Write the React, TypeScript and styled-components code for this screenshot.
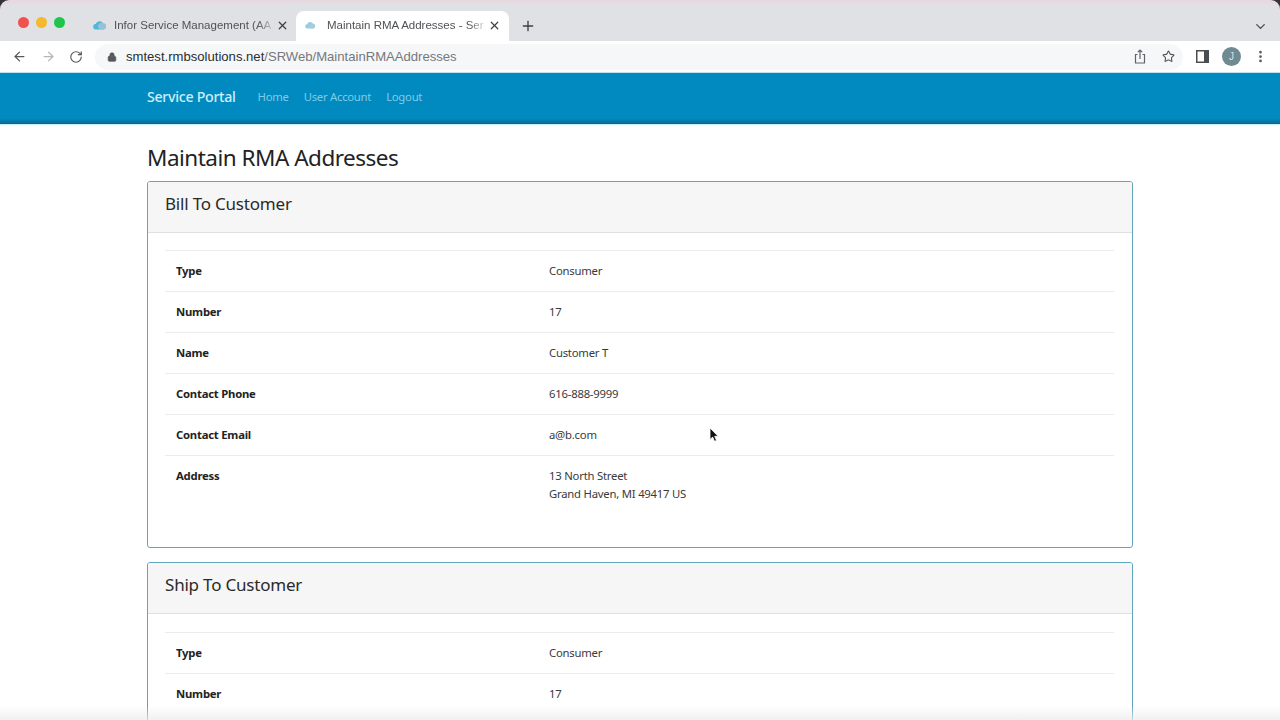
import React from "react";
import styled, { createGlobalStyle } from "styled-components";
import { ArrowLeft, ArrowRight, RotateCw, Lock, X, Plus, ChevronDown, Star, MoreVertical } from "lucide-react";

// ------------------- Styled Components -------------------

const GlobalStyle = createGlobalStyle`
  html, body {
    margin: 0;
    padding: 0;
    height: 720px;
    overflow: hidden;
    background: #fff;
  }
  * {
    box-sizing: border-box;
  }
`;

const Screen = styled.div`
  position: relative;
  width: 1280px;
  height: 720px;
  overflow: hidden;
  font-family: "Noto Sans", "Open Sans", sans-serif;
  color: #333;
`;

const TabFrame = styled.div`
  background: #33323a;
`;

const TabStrip = styled.div`
  height: 41px;
  background: #dfe1e5;
  border-top: 3px solid #e6d9df;
  border-radius: 9px 9px 0 0;
  display: flex;
  align-items: flex-end;
  padding-left: 18px;
`;

const TrafficLights = styled.div`
  display: flex;
  gap: 7px;
  align-self: flex-start;
  margin-top: 14px;
  width: 65px;
`;

const Light = styled.span<{ $color: string }>`
  width: 11px;
  height: 11px;
  border-radius: 50%;
  background: ${(p) => p.$color};
`;

const Tab = styled.div<{ $active?: boolean }>`
  width: 213px;
  height: 30px;
  padding: 0 ${(p) => (p.$active ? "8px" : "7px")} 2px ${(p) => (p.$active ? "9px" : "10px")};
  display: flex;
  align-items: center;
  border-radius: 8px 8px 0 0;
  background: ${(p) => (p.$active ? "#fff" : "transparent")};
  font-family: "Liberation Sans", sans-serif;
  font-size: 11.5px;
  color: #4f5256;
`;

const TabTitle = styled.span<{ $active?: boolean }>`
  flex: 1;
  margin-left: ${(p) => (p.$active ? "11px" : "7px")};
  white-space: nowrap;
  overflow: hidden;
  -webkit-mask-image: linear-gradient(to right, #000 88%, transparent);
  mask-image: linear-gradient(to right, #000 88%, transparent);
`;

const NewTab = styled.div`
  width: 30px;
  height: 30px;
  display: flex;
  align-items: center;
  justify-content: center;
  margin-left: 4px;
  color: #3c4043;
`;

const StripEnd = styled.div`
  margin-left: auto;
  height: 30px;
  padding-right: 12px;
  display: flex;
  align-items: center;
  color: #4a4d51;
`;

const Toolbar = styled.div`
  height: 32px;
  background: #fff;
  display: flex;
  align-items: center;
  padding-left: 12px;
  border-bottom: 1px solid #bfe4ee;
`;

const NavIcons = styled.div`
  display: flex;
  gap: 13.5px;
  width: 79px;
  align-items: center;
`;

const Omnibox = styled.div`
  width: 1088px;
  margin-left: 4px;
  height: 26px;
  border-radius: 13px;
  background: #f6f7f8;
  display: flex;
  align-items: center;
  padding: 0 8px 0 12px;
  font-family: "Liberation Sans", sans-serif;
  font-size: 13.1px;
  color: #75787c;
`;

const Host = styled.span`
  color: #2b2d30;
  margin-left: 9px;
`;

const OmniActions = styled.div`
  margin-left: auto;
  display: flex;
  align-items: center;
  gap: 15px;
  color: #606367;
`;

const ToolActions = styled.div`
  display: flex;
  align-items: center;
  margin-left: 13px;
  color: #5a5d60;
`;

const Avatar = styled.span`
  width: 19px;
  height: 19px;
  margin-left: 13px;
  border-radius: 50%;
  background: #6f8a92;
  color: #d7e3e6;
  font-family: "Liberation Sans", sans-serif;
  font-size: 10px;
  display: flex;
  align-items: center;
  justify-content: center;
`;

const MoreButton = styled(MoreVertical)`
  margin-left: 12px;
`;

const NavBar = styled.nav`
  height: 51px;
  background: linear-gradient(to bottom, #018ac0 90%, #0a6f98);
  border-bottom: 1px solid #0a6a90;
  box-shadow: 0 1px 1px #c4f0f8;
  padding: 0 0 4px 147px;
  display: flex;
  align-items: center;
  gap: 22px;
`;

const Brand = styled.a`
  font-size: 14.2px;
  font-weight: 500;
  letter-spacing: -0.3px;
  color: #cfeef8;
`;

const NavLinks = styled.div`
  display: flex;
  gap: 15px;
`;

const NavLink = styled.a`
  font-size: 11.3px;
  letter-spacing: -0.26px;
  color: #7fcbe8;
`;

const Content = styled.main`
  width: 986px;
  margin-left: 147px;
`;

const PageTitle = styled.h1`
  margin: 0;
  height: 57px;
  padding-top: 17px;
  font-size: 22.5px;
  line-height: 34px;
  font-weight: 400;
  letter-spacing: -0.5px;
  color: #222;
`;

const Panel = styled.section`
  border: 1px solid #5fa5bc;
  border-radius: 3px;
  margin-bottom: 14px;
  background: #fff;
`;

const PanelHeading = styled.header<{ $lift: number }>`
  height: 51px;
  padding: 0 18px ${(p) => p.$lift}px 17px;
  display: flex;
  align-items: center;
  background: #f6f6f6;
  border-bottom: 1px solid #e0e0e0;
  border-radius: 2px 2px 0 0;
  font-size: 17px;
  letter-spacing: -0.2px;
  color: #2a2a2a;
`;

const PanelBody = styled.div<{ $top: number }>`
  padding: ${(p) => p.$top}px 18px 34px 17px;
`;

const Row = styled.div`
  display: grid;
  grid-template-columns: 373px 1fr;
  min-height: 41px;
  padding: 11px 11px 9px;
  border-top: 1px solid #ececec;
  font-size: 11.3px;
  line-height: 18.4px;
  letter-spacing: -0.22px;
`;

const Label = styled.div`
  font-weight: 700;
  color: #222;
`;

const Value = styled.div`
  color: #3a3a3a;
`;

const Cursor = styled.svg`
  position: absolute;
  left: 709px;
  top: 427px;
`;

const BottomFade = styled.div`
  position: absolute;
  left: 0;
  right: 0;
  bottom: 0;
  height: 14px;
  background: linear-gradient(to bottom, rgba(235, 235, 235, 0), rgba(235, 235, 235, 0.75));
`;

// ------------------- Icons -------------------

const CloudIcon = ({ faded }: { faded?: boolean }) =>
  faded ? (
    <svg width="11" height="8" viewBox="0 0 14 10">
      <path d="M3 9.5a2.7 2.7 0 0 1-.3-5.4A4 4 0 0 1 10 3.2a3.2 3.2 0 0 1 .6 6.3z" fill="#8fd0e6" />
      <path d="M7 9.5a3 3 0 0 1 3-6.3 3.2 3.2 0 0 1 .6 6.3z" fill="#b8c8d0" opacity={0.6} />
    </svg>
  ) : (
    <svg width="14" height="10" viewBox="0 0 14 10">
      <path d="M3 9.5a2.7 2.7 0 0 1-.3-5.4A4 4 0 0 1 10 3.2a3.2 3.2 0 0 1 .6 6.3z" fill="#4fb6dc" />
      <path d="M7 9.5a3 3 0 0 1 3-6.3 3.2 3.2 0 0 1 .6 6.3z" fill="#a8c4d4" opacity={0.8} />
    </svg>
  );

const ShareIcon = () => (
  <svg width="14" height="15" viewBox="0 0 14 15" fill="none" stroke="currentColor" strokeWidth="1.2">
    <path d="M4.5 5.5H2.5v8.5h9V5.5H9.5" />
    <path d="M7 10V1.2M4.8 3.2 7 1l2.2 2.2" />
  </svg>
);

const SidePanelIcon = () => (
  <svg width="13" height="13" viewBox="0 0 13 13">
    <rect x="0.75" y="0.75" width="11.5" height="11.5" fill="none" stroke="#4b4e51" strokeWidth="1.5" />
    <rect x="8" y="1" width="4" height="11" fill="#4b4e51" />
  </svg>
);

// ------------------- Data -------------------

const billRows: [string, React.ReactNode][] = [
  ["Type", "Consumer"],
  ["Number", "17"],
  ["Name", "Customer T"],
  ["Contact Phone", "616-888-9999"],
  ["Contact Email", "a@b.com"],
  [
    "Address",
    <>
      13 North Street
      <br />
      Grand Haven, MI 49417 US
    </>,
  ],
];

const shipRows: [string, React.ReactNode][] = [
  ["Type", "Consumer"],
  ["Number", "17"],
];

type AddressPanelProps = {
  title: string;
  rows: [string, React.ReactNode][];
  lift: number;
  bodyTop: number;
};

function AddressPanel({ title, rows, lift, bodyTop }: AddressPanelProps) {
  return (
    <Panel>
      <PanelHeading $lift={lift}>{title}</PanelHeading>
      <PanelBody $top={bodyTop}>
        {rows.map(([label, value]) => (
          <Row key={label}>
            <Label>{label}</Label>
            <Value>{value}</Value>
          </Row>
        ))}
      </PanelBody>
    </Panel>
  );
}

export default function App(): React.JSX.Element {
  return (
    <Screen>
      <GlobalStyle />
      <TabFrame>
        <TabStrip>
          <TrafficLights>
            <Light $color="#f0524f" />
            <Light $color="#f5b82e" />
            <Light $color="#1fc44a" />
          </TrafficLights>
          <Tab>
            <CloudIcon />
            <TabTitle>Infor Service Management (AA</TabTitle>
            <X size={13} strokeWidth={2.2} color="#3c4043" />
          </Tab>
          <Tab $active>
            <CloudIcon faded />
            <TabTitle $active>Maintain RMA Addresses - Ser</TabTitle>
            <X size={13} strokeWidth={2.2} color="#3c4043" />
          </Tab>
          <NewTab>
            <Plus size={16} strokeWidth={2} />
          </NewTab>
          <StripEnd>
            <ChevronDown size={15} strokeWidth={2.2} />
          </StripEnd>
        </TabStrip>
      </TabFrame>
      <Toolbar>
        <NavIcons>
          <ArrowLeft size={15} strokeWidth={2} color="#55585c" />
          <ArrowRight size={15} strokeWidth={2} color="#b4b7ba" />
          <RotateCw size={14} strokeWidth={2} color="#55585c" />
        </NavIcons>
        <Omnibox>
          <Lock size={10} fill="#55585c" color="#55585c" strokeWidth={2} />
          <Host>smtest.rmbsolutions.net</Host>/SRWeb/MaintainRMAAddresses
          <OmniActions>
            <ShareIcon />
            <Star size={13} strokeWidth={2} color="#505356" />
          </OmniActions>
        </Omnibox>
        <ToolActions>
          <SidePanelIcon />
          <Avatar>J</Avatar>
          <MoreButton size={15} strokeWidth={2.4} />
        </ToolActions>
      </Toolbar>
      <NavBar>
        <Brand>Service Portal</Brand>
        <NavLinks>
          <NavLink>Home</NavLink>
          <NavLink>User Account</NavLink>
          <NavLink>Logout</NavLink>
        </NavLinks>
      </NavBar>
      <Content>
        <PageTitle>Maintain RMA Addresses</PageTitle>
        <AddressPanel title="Bill To Customer" rows={billRows} lift={8} bodyTop={17} />
        <AddressPanel title="Ship To Customer" rows={shipRows} lift={6} bodyTop={18} />
      </Content>
      <Cursor width="10" height="16" viewBox="0 0 10 16">
        <path d="M1 1v11.5l2.7-2.4 1.8 4.2 2-.9-1.8-4.1H9.2z" fill="#111" stroke="#fff" strokeWidth="0.8" />
      </Cursor>
      <BottomFade />
    </Screen>
  );
}
